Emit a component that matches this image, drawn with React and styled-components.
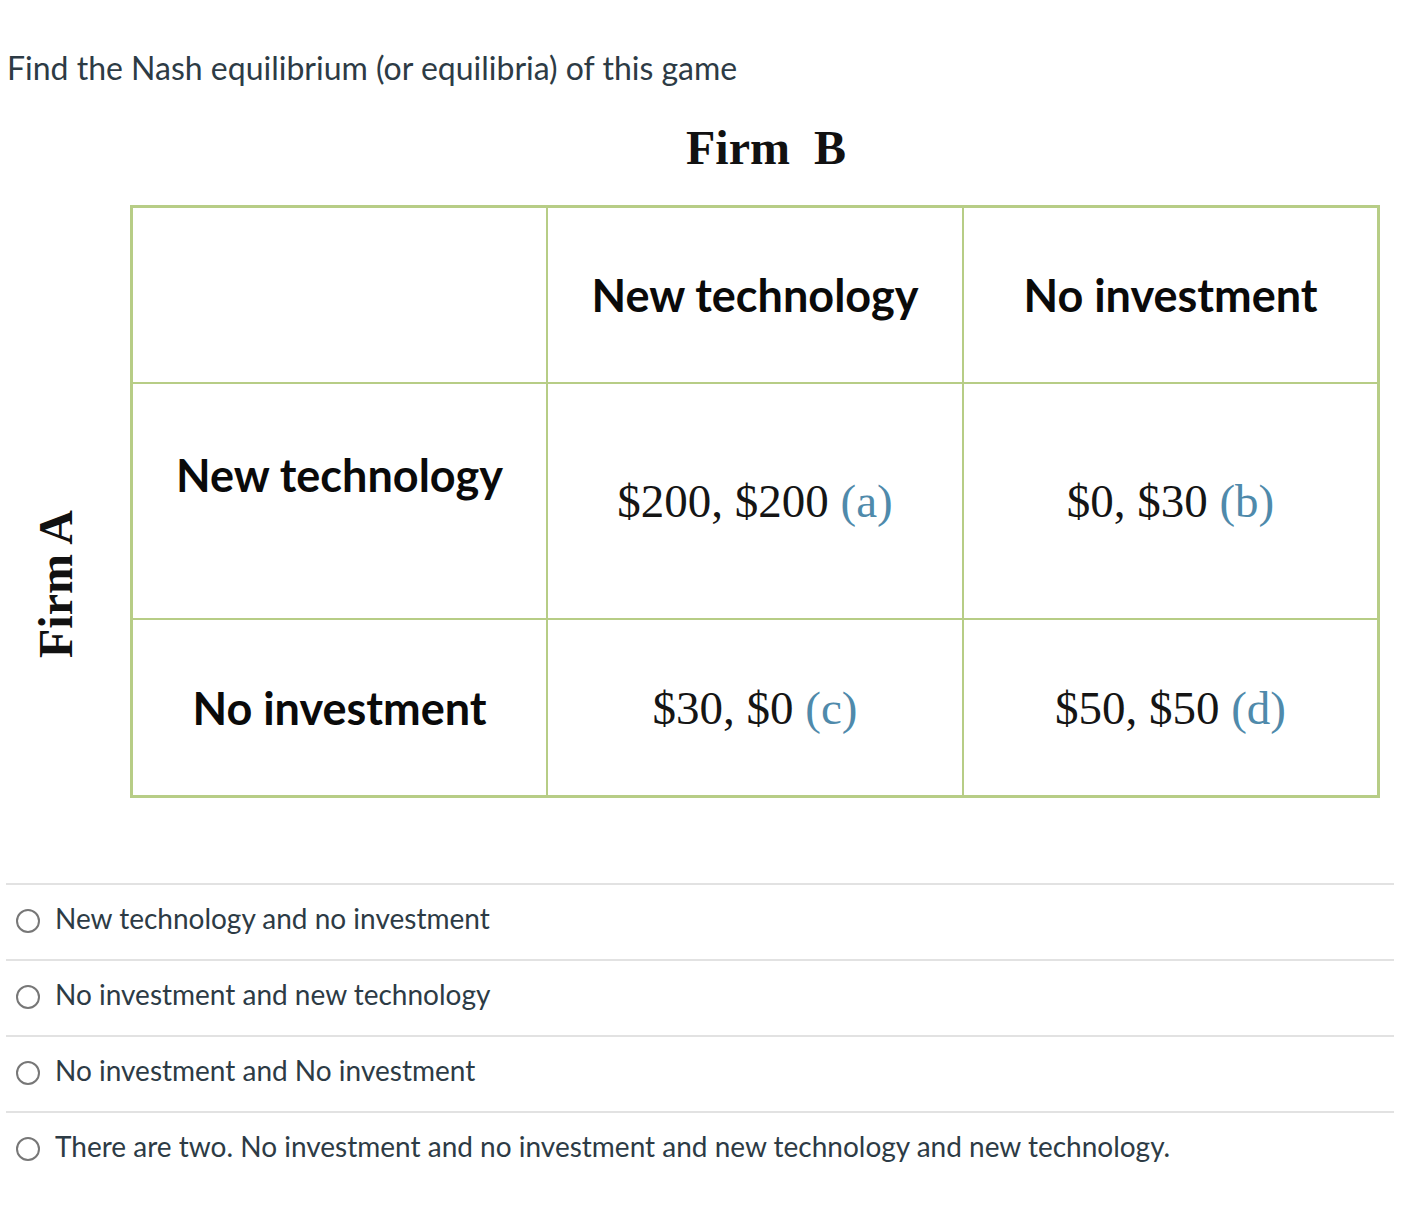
import React from "react";
import styled, { createGlobalStyle } from "styled-components";

const Global = createGlobalStyle`
  html, body { margin: 0; padding: 0; background: #fff; }
  body { font-family: Lato, "Liberation Sans", sans-serif; }
`;

const Page = styled.div`
  width: 1388px;
  padding: 0 0 0 6px;
`;

const Question = styled.p`
  margin: 0;
  padding: 50px 0 0 1px;
  font-family: Lato, sans-serif;
  font-size: 32px;
  line-height: 36px;
  color: #2d3b45;
`;

const Figure = styled.div`
  display: flex;
  flex-direction: column;
  padding-top: 32px;
`;

const FirmB = styled.div`
  font-family: "Liberation Serif", serif;
  font-weight: bold;
  font-size: 48px;
  line-height: 60px;
  color: #111;
  white-space: pre;
  padding-left: 680px;
`;

const Body = styled.div`
  display: flex;
  margin-top: 27px;
`;

const SideLabel = styled.div`
  width: 124px;
  display: flex;
  align-items: center;
  padding-top: 164px;
  box-sizing: border-box;
  padding-left: 26px;
`;

const FirmA = styled.span`
  writing-mode: vertical-rl;
  transform: rotate(180deg);
  font-family: "Liberation Serif", serif;
  font-weight: bold;
  font-size: 48px;
  line-height: 48px;
  color: #111;
  white-space: nowrap;
`;

const Grid = styled.div`
  display: grid;
  grid-template-columns: 413px 414px 413px;
  grid-template-rows: 174px 234px 175px;
  gap: 2px;
  padding: 3px;
  background: #b7cd86;
`;

const Cell = styled.div`
  background: #fff;
  display: flex;
  align-items: center;
  justify-content: center;
  box-sizing: border-box;
  padding-bottom: ${(p) => p.$lift || 0}px;
`;

const Heading = styled.span`
  font-family: Lato, "Open Sans", sans-serif;
  font-weight: 700;
  font-size: 45px;
  color: #0a0a0a;
`;

const Payoff = styled.span`
  font-family: "Liberation Serif", serif;
  font-size: 47px;
  color: #151515;
`;

const Tag = styled.span`
  color: #4f8aab;
`;

const Options = styled.div`
  margin-top: 85px;
`;

const Option = styled.label`
  display: flex;
  align-items: center;
  height: 76px;
  padding-bottom: 8px;
  box-sizing: border-box;
  border-top: 2px solid #e2e2e2;
  font-family: Lato, sans-serif;
  font-size: 28px;
  color: #2d3b45;
`;

const Radio = styled.span`
  width: 24px;
  height: 24px;
  border: 2px solid #777;
  border-radius: 50%;
  box-sizing: border-box;
  margin: 6px 15px 0 10px;
  flex: none;
`;

const options = [
  "New technology and no investment",
  "No investment and new technology",
  "No investment and No investment",
  "There are two. No investment and no investment and new technology and new technology.",
];

export default function App() {
  return (
    <Page>
      <Global />
      <Question>Find the Nash equilibrium (or equilibria) of this game</Question>
      <Figure>
        <FirmB>{"Firm  B"}</FirmB>
        <Body>
          <SideLabel>
            <FirmA>Firm A</FirmA>
          </SideLabel>
          <Grid>
            <Cell />
            <Cell><Heading>New technology</Heading></Cell>
            <Cell><Heading>No investment</Heading></Cell>

            <Cell $lift={52}><Heading>New technology</Heading></Cell>
            <Cell><Payoff>$200, $200 <Tag>(a)</Tag></Payoff></Cell>
            <Cell><Payoff>$0, $30 <Tag>(b)</Tag></Payoff></Cell>

            <Cell><Heading>No investment</Heading></Cell>
            <Cell><Payoff>$30, $0 <Tag>(c)</Tag></Payoff></Cell>
            <Cell><Payoff>$50, $50 <Tag>(d)</Tag></Payoff></Cell>
          </Grid>
        </Body>
      </Figure>
      <Options>
        {options.map((o) => (
          <Option key={o}>
            <Radio />
            {o}
          </Option>
        ))}
      </Options>
    </Page>
  );
}
